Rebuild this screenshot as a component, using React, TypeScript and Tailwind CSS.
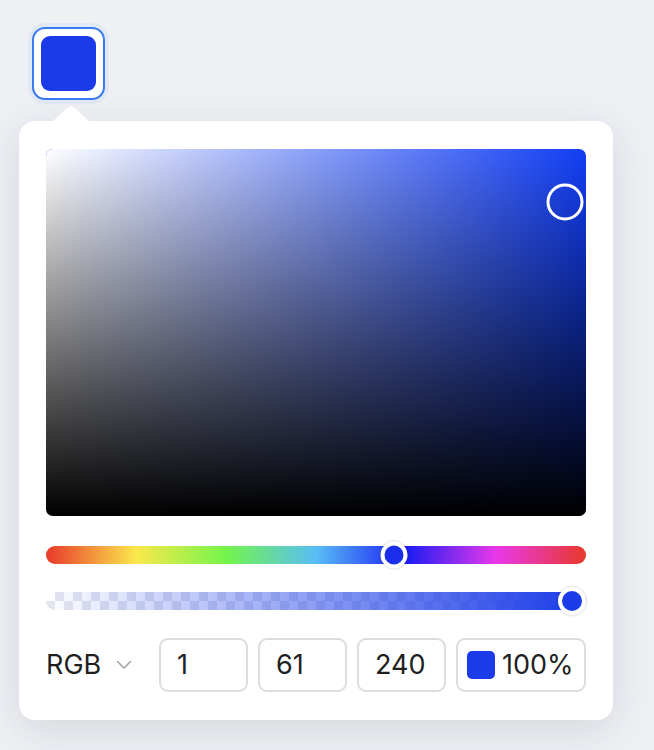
import { useState } from 'react';

const font = { fontFamily: 'Inter, "Noto Sans", "Liberation Sans", sans-serif' };

const swatch = '#1b3ae8';

const ChannelInput = ({ value }: { value: string }) => (
  <div className="w-[89px] h-[54px] rounded-[9px] border-2 border-[#dcdcdc] flex items-center pl-[16px] text-[27px] text-[#1f1f1f]">
    {value}
  </div>
);

const App = () => {
  const [rgb] = useState({ r: 1, g: 61, b: 240 });
  const [hue] = useState(0.645);
  const [sat] = useState({ x: 0.962, y: 0.145 });
  const [alpha] = useState(1);

  return (
    <div className="min-h-screen bg-[#eff0f4] pt-[27px] pl-[32px]" style={font}>
      <button className="w-[73px] h-[73px] rounded-[13px] border-2 border-[#3a7af2] bg-white p-[7px] flex shadow-[0_0_0_4px_#e2e9f6]">
        <span className="flex-1 rounded-[9px]" style={{ background: swatch }} />
      </button>

      <div className="relative mt-[21px] ml-[-13px] w-[594px] rounded-[16px] bg-white px-[27px] pt-[28px] pb-[28px] shadow-[0_10px_40px_rgba(30,35,60,0.12)]">
        {/* caret */}
        <svg className="absolute left-[33px] top-[-15px]" width="38" height="16" viewBox="0 0 38 16">
          <path d="M0 16 L15.5 1.8 Q19 -1 22.5 1.8 L38 16 Z" fill="white" />
        </svg>

        {/* saturation / value area */}
        <div className="relative h-[367px] rounded-[7px] overflow-hidden bg-[rgb(18,62,245)]">
          <div className="absolute inset-0 bg-gradient-to-r from-white to-transparent" />
          <div className="absolute inset-0 bg-gradient-to-b from-transparent to-black" />
        </div>
        <div className="relative h-0">
          <div
            className="absolute w-[37px] h-[37px] rounded-full border-[3px] border-white -translate-x-1/2 -translate-y-1/2"
            style={{ left: `${sat.x * 100}%`, top: `${-367 + sat.y * 367}px` }}
          />
        </div>

        {/* hue */}
        <div className="relative mt-[30px] h-[18px] rounded-full bg-[linear-gradient(to_right,#e8392b_0%,#fbe84c_16.7%,#74f54b_33.3%,#58bdf6_50%,#1a1cf2_66.7%,#e838ea_83.3%,#e8392b_100%)]">
          <div
            className="absolute top-1/2 w-[27px] h-[27px] rounded-full border-[4px] border-white bg-[#1b2ee9] -translate-x-1/2 -translate-y-1/2 shadow-[0_0_0_1.5px_rgba(0,0,0,0.07)]"
            style={{ left: `${hue * 100}%` }}
          />
        </div>

        {/* alpha */}
        <div className="relative mt-[28px] h-[18px] rounded-full bg-[conic-gradient(#e4e6ee_25%,#ffffff_0_50%,#e4e6ee_0_75%,#ffffff_0)] bg-[length:18px_18px]">
          <div className="absolute inset-0 rounded-full bg-gradient-to-r from-transparent to-[rgb(24,58,232)]" />
          <div
            className="absolute top-1/2 w-[28px] h-[28px] rounded-full border-[4px] border-white bg-[#1b3ae8] -translate-x-1/2 -translate-y-1/2 shadow-[0_0_0_1.5px_rgba(0,0,0,0.07)]"
            style={{ left: `calc(${alpha * 100}% - 14px)` }}
          />
        </div>

        {/* inputs */}
        <div className="mt-[28px] flex items-center gap-[10px]">
          <div className="w-[103px] flex items-center gap-[15px] text-[27px] text-[#1f1f1f]">
            <span>RGB</span>
            <svg width="16" height="10" viewBox="0 0 16 10">
              <polyline points="1.5,1.5 8,8 14.5,1.5" fill="none" stroke="#a3a3a3" strokeWidth="1.6" strokeLinecap="round" strokeLinejoin="round" />
            </svg>
          </div>
          <ChannelInput value={String(rgb.r)} />
          <ChannelInput value={String(rgb.g)} />
          <ChannelInput value={String(rgb.b)} />
          <div className="flex-1 h-[54px] rounded-[9px] border-2 border-[#dcdcdc] flex items-center pl-[9px] gap-[7px] text-[27px] text-[#1f1f1f]">
            <span className="w-[28px] h-[28px] rounded-[5px]" style={{ background: swatch }} />
            <span>{Math.round(alpha * 100)}%</span>
          </div>
        </div>
      </div>
    </div>
  );
};

export default App;
